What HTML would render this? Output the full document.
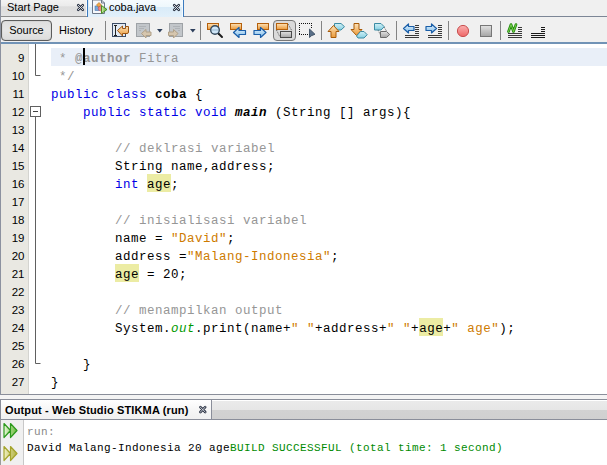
<!DOCTYPE html>
<html><head><meta charset="utf-8"><title>coba.java</title>
<style>
html,body{margin:0;padding:0;}
body{width:607px;height:465px;overflow:hidden;background:#f0f0f0;position:relative;font-family:"Liberation Sans",sans-serif;font-size:11px;color:#000;}
.abs{position:absolute;}
#tabline{left:0;top:16px;width:87px;height:1px;background:#8c8c8c;}
#tabline2{left:183px;top:16px;width:424px;height:1px;background:#7c8696;}
.tab{position:absolute;top:0;height:16px;font-size:11px;line-height:14px;white-space:nowrap;}
#tab1{left:0;width:86px;background:linear-gradient(#f2f2f2,#ebebeb 38%,#dddddd 42%,#e2e2e2);border-right:1px solid #f8f8f8;}
#tab2{left:87px;width:95px;height:17px;background:linear-gradient(#f6fbfe,#eef7fc 40%,#d9ebf8 44%,#e2f0fa);border-left:1px solid #3b7bbf;border-right:1px solid #3b7bbf;box-shadow:inset -1px 0 0 #f4fafe,inset 1px 0 0 #dcebf8;}
#tbline{left:0;top:42px;width:607px;height:2px;background:#7193b6;}
#srcbtn{left:1px;top:20px;width:49px;height:19px;border:1px solid #5c5c5c;border-radius:4px;background:linear-gradient(#dedede,#e6e6e6 50%,#dcdcdc);font-size:11px;line-height:18px;text-align:center;letter-spacing:-0.1px;box-shadow:inset 0 0 1px #888;}
#hist{left:59px;top:21px;font-size:11px;line-height:18px;}
#editor{left:0;top:44px;width:607px;height:350px;background:#fff;}
#gutter{left:1px;top:44px;width:27px;height:350px;background:#e9e8e2;border-right:1px solid #d4d4d0;}
#gutl{left:0;top:44px;width:1px;height:350px;background:#c4ccd4;}
.ln{position:absolute;left:1px;width:23.500px;text-align:right;font-family:"Liberation Sans",sans-serif;font-size:11.500px;line-height:18px;height:18px;color:#000;}
.code{position:absolute;left:51px;white-space:pre;font-family:"Liberation Mono",monospace;font-size:12.5px;letter-spacing:0.5px;line-height:22px;height:18px;color:#000;}
.k{color:#0000e6;}
.c{color:#969696;}
.s{color:#ce7b00;}
.g{color:#009900;font-style:italic;}
.hl{background:#ececa4;display:inline-block;height:18px;vertical-align:top;}
#curline{left:51px;top:48px;width:556px;height:18px;background:#e9eff8;}
#caret{left:83px;top:48px;width:2px;height:17px;background:#000;}
#edbot{left:0;top:394px;width:607px;height:1px;background:#8a8e9a;}
#gap{left:0;top:395px;width:607px;height:4px;background:#f4f4f4;}
#outhead{left:0;top:399px;width:607px;height:21px;background:linear-gradient(#ffffff 0,#ffffff 1px,#eaeaea 1px,#e6e6e6 10px,#d2d2d2 10px,#d0d0d0 19px);border-top:1px solid #8a8e9a;border-bottom:1px solid #8a8e9a;box-sizing:border-box;}
#outtab{left:0;top:400px;width:212px;height:19px;background:linear-gradient(#ffffff,#f6f6f6 50%,#f0f0f0);border-left:1px solid #8a8e9a;border-right:1px solid #8a8e9a;font-weight:bold;font-size:11px;letter-spacing:0.14px;line-height:20px;box-sizing:border-box;padding-left:4px;white-space:nowrap;}
#outbody{left:0;top:420px;width:607px;height:45px;background:#fff;}
#outside{left:0;top:420px;width:24px;height:45px;background:#f0f0f0;border-right:1px solid #c8c8c8;border-left:1px solid #9a9a9a;box-sizing:border-box;}
.out{position:absolute;left:27px;white-space:pre;font-family:"Liberation Mono",monospace;font-size:11px;letter-spacing:0.4px;line-height:15px;}
#leftedge{left:0;top:0;width:1px;height:395px;background:#8c92a0;z-index:5;}
</style></head><body>
<div id="tabline" class="abs"></div>
<div id="tabline2" class="abs"></div>
<div id="tab1" class="tab"><span style="position:absolute;left:7px;top:0px">Start Page</span></div>
<div id="tab2" class="tab"><span style="position:absolute;left:21px;top:0px">coba.java</span></div>
<div id="tbline" class="abs"></div>
<div id="leftedge" class="abs"></div>
<div id="srcbtn" class="abs">Source</div>
<div id="hist" class="abs">History</div>
<div id="editor" class="abs"></div>
<div id="gutl" class="abs"></div>
<div id="gutter" class="abs"></div>
<div id="curline" class="abs"></div>
<div id="lines">
<div class="ln" style="top:49px">9</div>
<div class="code" style="top:48px"><span class="c"> * <b>@author</b> Fitra</span></div>
<div class="ln" style="top:67px">10</div>
<div class="code" style="top:66px"><span class="c"> */</span></div>
<div class="ln" style="top:85px">11</div>
<div class="code" style="top:84px"><span class="k">public class</span> <b>coba</b> {</div>
<div class="ln" style="top:103px">12</div>
<div class="code" style="top:102px">    <span class="k">public static void</span> <b><i>main</i></b> (String [] args){</div>
<div class="ln" style="top:121px">13</div>
<div class="ln" style="top:139px">14</div>
<div class="code" style="top:138px">        <span class="c">// deklrasi variabel</span></div>
<div class="ln" style="top:157px">15</div>
<div class="code" style="top:156px">        String name,address;</div>
<div class="ln" style="top:175px">16</div>
<div class="code" style="top:174px">        <span class="k">int</span> <span class="hl">age</span>;</div>
<div class="ln" style="top:193px">17</div>
<div class="ln" style="top:211px">18</div>
<div class="code" style="top:210px">        <span class="c">// inisialisasi variabel</span></div>
<div class="ln" style="top:229px">19</div>
<div class="code" style="top:228px">        name = <span class="s">"David"</span>;</div>
<div class="ln" style="top:247px">20</div>
<div class="code" style="top:246px">        address =<span class="s">"Malang-Indonesia"</span>;</div>
<div class="ln" style="top:265px">21</div>
<div class="code" style="top:264px">        <span class="hl">age</span> = 20;</div>
<div class="ln" style="top:283px">22</div>
<div class="ln" style="top:301px">23</div>
<div class="code" style="top:300px">        <span class="c">// menampilkan output</span></div>
<div class="ln" style="top:319px">24</div>
<div class="code" style="top:318px">        System.<span class="g">out</span>.print(name+<span class="s">" "</span>+address+<span class="s">" "</span>+<span class="hl">age</span>+<span class="s">" age"</span>);</div>
<div class="ln" style="top:337px">25</div>
<div class="ln" style="top:355px">26</div>
<div class="code" style="top:354px">    }</div>
<div class="ln" style="top:373px">27</div>
<div class="code" style="top:372px">}</div>
</div>
<div id="caret" class="abs"></div>
<div id="edbot" class="abs"></div>
<div id="gap" class="abs"></div>
<div id="outhead" class="abs"></div>
<div id="outtab" class="abs">Output - Web Studio STIKMA (run)</div>
<div id="outbody" class="abs"></div>
<div id="outside" class="abs"></div>
<div class="out" style="top:425px;color:#888">run:</div>
<div class="out" style="top:441px;">David Malang-Indonesia 20 age<span style="color:#008a00">BUILD SUCCESSFUL (total time: 1 second)</span></div>
<svg class="abs" style="left:0;top:0" width="607" height="465" viewBox="0 0 607 465">
<defs>
<linearGradient id="gOr" x1="0" y1="0" x2="0" y2="1"><stop offset="0" stop-color="#fde2b8"/><stop offset="1" stop-color="#eb9a3a"/></linearGradient>
<linearGradient id="gBl" x1="0" y1="0" x2="0" y2="1"><stop offset="0" stop-color="#e4f2fc"/><stop offset="1" stop-color="#7fbdea"/></linearGradient>
<linearGradient id="gGy" x1="0" y1="0" x2="0" y2="1"><stop offset="0" stop-color="#e2e2e2"/><stop offset="1" stop-color="#a4a4a4"/></linearGradient>
<linearGradient id="gBm" x1="0" y1="0" x2="0" y2="1"><stop offset="0" stop-color="#d0f0f6"/><stop offset="1" stop-color="#86cfe2"/></linearGradient>
<linearGradient id="gRed" x1="0" y1="0" x2="0" y2="1"><stop offset="0" stop-color="#fbb0b0"/><stop offset="1" stop-color="#ee6666"/></linearGradient>
<linearGradient id="gGr" x1="0" y1="0" x2="1" y2="0"><stop offset="0" stop-color="#e8f8d8"/><stop offset="1" stop-color="#68b838"/></linearGradient>
<linearGradient id="gYe" x1="0" y1="0" x2="1" y2="0"><stop offset="0" stop-color="#f0f0c0"/><stop offset="1" stop-color="#b0b040"/></linearGradient>
<linearGradient id="gPl" x1="0" y1="0" x2="1" y2="0"><stop offset="0" stop-color="#d0eeb0"/><stop offset="1" stop-color="#58a828"/></linearGradient>
</defs>
<!-- separators -->
<g fill="#848484">
<rect x="105" y="21" width="1" height="19"/><rect x="200" y="21" width="1" height="19"/><rect x="321" y="21" width="1" height="19"/><rect x="396" y="21" width="1" height="19"/><rect x="448" y="21" width="1" height="19"/><rect x="500" y="21" width="1" height="19"/>
</g>
<!-- icon1 last edit -->
<rect x="112.5" y="23.5" width="13" height="13" fill="#e2eaf4" stroke="#3c4c66"/>
<path d="M114 25.5h3M115.5 25.5v10M114 35.5h3" stroke="#222" stroke-width="1" fill="none"/>
<path d="M117.5 30.5l5-4.5v2.5h3v-2h3v5.5q0 1.5-1.5 1.5h-4.5v2.5z" fill="url(#gOr)" stroke="#9c5410" stroke-width="1" stroke-linejoin="round"/>
<!-- icon2 back disabled -->
<rect x="136.500" y="23.500" width="13" height="13" fill="#c2c6ca" stroke="#9ea2a6"/>
<path d="M139 26.5h7M139 28.500h5M139 30.500h2" stroke="#aeb2b6" stroke-width="1"/>
<path d="M141.500 33.500l4.500-4v2.500h5v3.500h-5v2.500z" fill="#d6c6ae" stroke="#b0a088" stroke-width="1" stroke-linejoin="round"/>
<path d="M157 29h5.600l-2.800 3.400z" fill="#2d3f5c"/>
<!-- icon3 fwd disabled -->
<rect x="169.500" y="23.500" width="13" height="13" fill="#c2c6ca" stroke="#9ea2a6"/>
<path d="M173 26.500h7M175 28.500h5M178 30.500h2" stroke="#aeb2b6" stroke-width="1"/>
<path d="M178 33.500l-4.500-4v2.500h-5v3.500h5v2.500z" fill="#d6c6ae" stroke="#b0a088" stroke-width="1" stroke-linejoin="round"/>
<path d="M190 29h5.600l-2.800 3.400z" fill="#2d3f5c"/>
<!-- icon4 find -->
<rect x="207.500" y="23.500" width="11" height="6" fill="url(#gOr)" stroke="#b4600c"/>
<path d="M218.500 33.500l3.500 3.500" stroke="#1c1c1c" stroke-width="2" stroke-linecap="round"/>
<circle cx="215" cy="30" r="4.300" fill="#cfe6f7" stroke="#33485c" stroke-width="1.400"/>
<path d="M212 30h6" stroke="#9ab8d0" stroke-width="1"/>
<!-- icon5 find prev -->
<rect x="230.500" y="23.500" width="11" height="6" fill="url(#gOr)" stroke="#b4600c"/>
<path d="M233.500 32.500l5.500-5v3h6.500v4h-6.500v3z" fill="url(#gBl)" stroke="#1a5ea8" stroke-width="1.200" stroke-linejoin="round"/>
<!-- icon6 find next -->
<rect x="257.500" y="23.500" width="11" height="6" fill="url(#gOr)" stroke="#b4600c"/>
<path d="M266 32.500l-5.500-5v3h-6.500v4h6.500v3z" fill="url(#gBl)" stroke="#1a5ea8" stroke-width="1.200" stroke-linejoin="round"/>
<!-- icon7 toggle highlight -->
<rect x="273.500" y="20.500" width="22" height="20" rx="3.500" fill="#dadada" stroke="#787878"/>
<path d="M288 24l4 7M276.500 30l3.500 7" stroke="#555" stroke-width="1" stroke-dasharray="1 1" fill="none"/>
<rect x="276.500" y="23.500" width="11" height="6" fill="url(#gOr)" stroke="#b4600c"/>
<rect x="280.500" y="31.500" width="11" height="6" fill="url(#gGy)" stroke="#4a4a4a"/>
<!-- icon8 rect select -->
<g stroke="#111" stroke-width="1" stroke-dasharray="1 1" shape-rendering="crispEdges" fill="none"><path d="M299 23.500h13M299 34.500h13M299.500 23v12M311.500 23v6"/></g>
<path d="M309.500 29v8.500l2-1.800 3.500-1.400z" fill="#5a7088" stroke="#34465a" stroke-width=".8" stroke-linejoin="round"/>
<!-- icon9 prev bookmark -->
<path d="M334.500 23.500h6.500l3.500 3.200-3.500 3.300h-6.500z" fill="url(#gBm)" stroke="#3c8ca4" stroke-linejoin="round"/>
<path d="M333.500 25.500l5.500 6h-3v6h-5v-6h-3z" fill="url(#gOr)" stroke="#a85a08" stroke-linejoin="round"/>
<!-- icon10 next bookmark -->
<path d="M356.500 35.500l-5.500-6h3v-6h5v6h3z" fill="url(#gOr)" stroke="#a85a08" stroke-linejoin="round"/>
<path d="M360.500 31.500h3.500l3.200 3.200-3.200 3.300h-6l-1.500-2z" fill="url(#gBm)" stroke="#3c8ca4" stroke-linejoin="round"/>
<!-- icon11 toggle bookmark -->
<path d="M378 30l3.500 7M384 27l2.500 4" stroke="#555" stroke-width="1" stroke-dasharray="1 1" fill="none"/>
<path d="M374.500 23.500h6.500l3.200 3.200-3.200 3.300h-6.500z" fill="url(#gBm)" stroke="#3c8ca4" stroke-linejoin="round"/>
<path d="M380.500 31.500h6l3.200 3-3.200 3h-6z" fill="url(#gGy)" stroke="#6a6a6a" stroke-linejoin="round"/>
<!-- icon12 shift left -->
<g fill="#3a3a3a"><rect x="415" y="25" width="4" height="1"/><rect x="415" y="27" width="4" height="1"/><rect x="415" y="29" width="4" height="1"/><rect x="415" y="31" width="4" height="1"/><rect x="415" y="33" width="4" height="1"/><rect x="405" y="35" width="14" height="1"/><rect x="405" y="37" width="14" height="1"/></g>
<path d="M403.500 28.500l5-4.500v2.500h5.500v4h-5.500v2.500z" fill="url(#gBl)" stroke="#1a5ea8" stroke-width="1.200" stroke-linejoin="round"/>
<!-- icon13 shift right -->
<g fill="#3a3a3a"><rect x="438" y="25" width="4" height="1"/><rect x="438" y="27" width="4" height="1"/><rect x="438" y="29" width="4" height="1"/><rect x="438" y="31" width="4" height="1"/><rect x="438" y="33" width="4" height="1"/><rect x="428" y="35" width="14" height="1"/><rect x="428" y="37" width="14" height="1"/></g>
<path d="M436.500 28.500l-5-4.500v2.500h-5.500v4h5.500v2.500z" fill="url(#gBl)" stroke="#1a5ea8" stroke-width="1.200" stroke-linejoin="round"/>
<!-- icon14 record -->
<circle cx="463" cy="31" r="5.600" fill="url(#gRed)" stroke="#c85050" stroke-width="1"/>
<!-- icon15 stop -->
<rect x="480.500" y="25.500" width="11" height="11" fill="url(#gGy)" stroke="#767676"/>
<!-- icon16 comment -->
<g fill="#3a3a3a"><rect x="518" y="27" width="4" height="1"/><rect x="518" y="29" width="4" height="1"/><rect x="518" y="31" width="4" height="1"/><rect x="508" y="33" width="14" height="1"/><rect x="508" y="35" width="14" height="1"/><rect x="508" y="37" width="14" height="1"/></g>
<path d="M508.500 31.500l2.500-7 2.500 7 2.500-7" fill="none" stroke="#1f8a0a" stroke-width="2.600" stroke-linejoin="round" stroke-linecap="round"/>
<path d="M508.500 31.500l2.500-7 2.500 7 2.500-7" fill="none" stroke="#8fe060" stroke-width=".8" stroke-linejoin="round" stroke-linecap="round"/>
<!-- icon17 uncomment -->
<g fill="#1a1a1a"><rect x="541" y="27" width="4" height="1"/><rect x="541" y="29" width="4" height="1"/><rect x="541" y="31" width="4" height="1"/><rect x="531" y="33" width="14" height="1"/><rect x="531" y="35" width="14" height="1"/><rect x="531" y="37" width="14" height="1"/></g>
<!-- tab2 file icon -->
<path d="M92.500 0v13.500h12v-10.500l-3-3z" fill="#f6f8fb" stroke="#6e7888"/>
<path d="M101.500 0v3h3" fill="none" stroke="#6e7888"/>
<rect x="95" y="6" width="4.500" height="4.500" fill="#78a8d8" stroke="#4878b0" stroke-width=".6"/>
<path d="M99 2.500l2.500 2.500-2.500 2.500-2.500-2.500z" fill="#f0a848" stroke="#b06818" stroke-width=".6"/>
<circle cx="100.500" cy="8.500" r="2.300" fill="#f08888" stroke="#c05050" stroke-width=".6"/>
<path d="M101.500 5.500l5.500 4-5.500 4z" fill="url(#gPl)" stroke="#3c8414" stroke-width=".9" stroke-linejoin="round"/>
<!-- close X glyphs -->
<g stroke="#2c3444" stroke-width="2.600" stroke-linecap="round"><path d="M78.200 5.200l4.600 4.600M82.800 5.200l-4.600 4.600"/><path d="M174.200 5.200l4.600 4.600M178.800 5.200l-4.600 4.600"/><path d="M200.400 407.200l4.800 4.800M205.200 407.200l-4.800 4.800"/></g><g stroke="#e4e8ee" stroke-width=".9" stroke-linecap="round"><path d="M78.200 5.200l4.600 4.600M82.800 5.200l-4.600 4.600"/><path d="M174.200 5.200l4.600 4.600M178.800 5.200l-4.600 4.600"/><path d="M200.400 407.200l4.800 4.800M205.200 407.200l-4.800 4.800"/></g>
<!-- fold markers -->
<g stroke="#606060" fill="none" stroke-width="1"><path d="M35.500 44v31.500h5"/><path d="M35.500 117v246.500h5"/><rect x="30.500" y="106.500" width="10" height="10" fill="#fff"/><path d="M33 111.500h5" stroke="#444"/></g>
<!-- output run icons -->
<g stroke-linejoin="round" stroke-width="1.200"><path d="M4 423.500l6.500 7-6.500 7zM10.500 423.500l6.500 7-6.500 7z" fill="url(#gGr)" stroke="#2c9a1c"/><path d="M4 446.500l6.500 7-6.500 7zM10.500 446.500l6.500 7-6.500 7z" fill="url(#gYe)" stroke="#a4a42c"/></g>
</svg>


</body></html>
